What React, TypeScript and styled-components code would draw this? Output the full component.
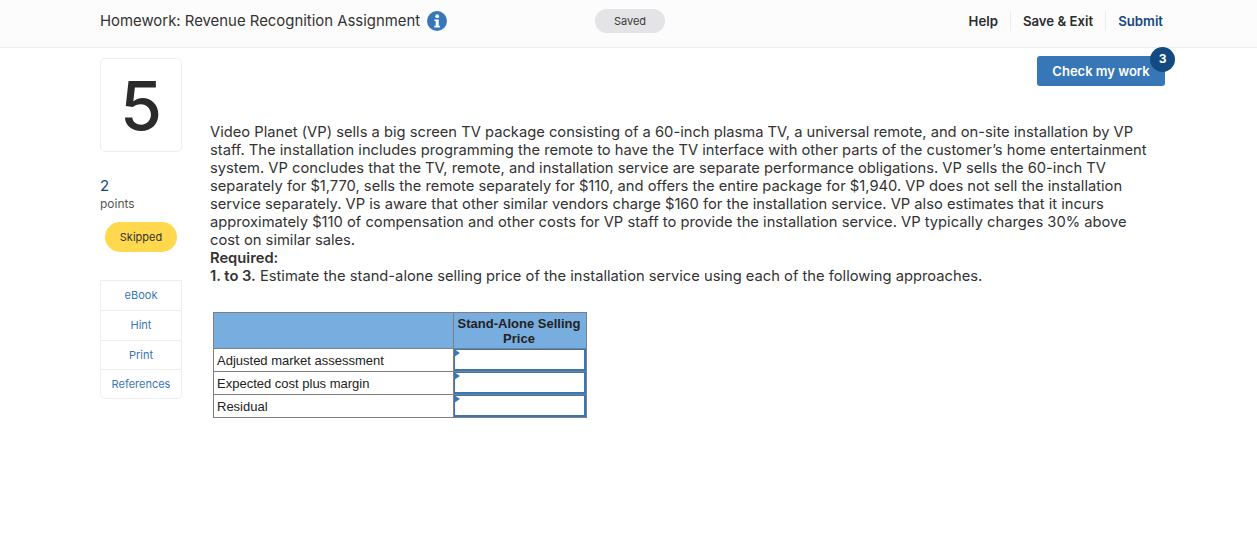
import React from "react";
import styled, { createGlobalStyle } from "styled-components";

const Global = createGlobalStyle`
  html, body { margin: 0; padding: 0; background: #fff; }
  body { font-family: Inter, Lato, sans-serif; color: #2d2d2d; font-variant-ligatures: none; }
`;

const Page = styled.div`
  width: 1257px;
  height: 543px;
  overflow: hidden;
`;

const Header = styled.header`
  box-sizing: content-box;
  background: #fcfcfc;
  border-bottom: 1px solid #ececec;
  display: grid;
  grid-template-columns: 495px 70px 1fr;
  align-items: center;
  padding: 0 94px 6px 100px;
  height: 41px;
`;

const TitleWrap = styled.div`
  display: flex;
  align-items: center;
  gap: 7px;
`;

const Title = styled.h1`
  margin: 0;
  font-size: 14.9px;
  font-weight: 400;
  color: #333;
`;

const InfoIcon = styled.svg`
  width: 20px;
  height: 20px;
  display: block;
`;

const SavedPill = styled.div`
  height: 24px;
  border-radius: 12px;
  background: #e4e3e6;
  font-size: 11px;
  color: #3b3b3b;
  display: flex;
  align-items: center;
  justify-content: center;
`;

const Nav = styled.nav`
  display: flex;
  justify-content: flex-end;
  align-items: center;
`;

const NavItem = styled.a<{ $accent?: boolean; $first?: boolean }>`
  font-size: 13.2px;
  font-weight: 600;
  line-height: 20px;
  padding: 0 12px;
  color: ${(p) => (p.$accent ? "#17497f" : "#2d2d2d")};
  border-left: ${(p) => (p.$first ? "none" : "1px solid #ececec")};
  &:last-child { padding-right: 0; }
`;

const Body = styled.div`
  display: flex;
  padding-left: 100px;
`;

const Sidebar = styled.aside`
  width: 82px;
  padding-top: 10px;
  display: flex;
  flex-direction: column;
  align-items: stretch;
`;

const NumberCard = styled.div`
  height: 94px;
  box-sizing: border-box;
  border: 1px solid #eeeeee;
  border-radius: 5px;
  display: flex;
  align-items: center;
  justify-content: center;
  font-size: 68px;
  line-height: 1;
  font-weight: 500;
  color: #2b2b2b;
`;

const Points = styled.div`
  margin-top: 26px;
  font-size: 15px;
  line-height: 16px;
  color: #17497f;
`;

const PointsLabel = styled.div`
  margin-top: 2px;
  font-size: 12px;
  line-height: 16px;
  color: #555;
`;

const SkippedPill = styled.div`
  align-self: center;
  margin-top: 10px;
  width: 72px;
  height: 30px;
  border-radius: 15px;
  background: #ffd84d;
  font-size: 11px;
  color: #333;
  display: flex;
  align-items: center;
  justify-content: center;
`;

const Tools = styled.div`
  margin-top: 28px;
  border: 1px solid #eeeeee;
  border-radius: 0 0 5px 5px;
  display: flex;
  flex-direction: column;
`;

const Tool = styled.a<{ $h: number }>`
  height: ${(p) => p.$h}px;
  box-sizing: border-box;
  display: flex;
  align-items: center;
  justify-content: center;
  padding-bottom: 1px;
  font-size: 11px;
  color: #3a76b5;
  & + & { border-top: 1px solid #eeeeee; }
`;

const Main = styled.main`
  width: 955px;
  padding-left: 28px;
  position: relative;
`;

const ButtonRow = styled.div`
  display: flex;
  justify-content: flex-end;
  padding-top: 8px;
`;

const CheckButton = styled.button`
  position: relative;
  width: 128px;
  height: 30px;
  border: 0;
  border-radius: 3px;
  background: #3777b7;
  color: #fff;
  font-family: inherit;
  font-size: 13px;
  font-weight: 600;
  padding: 0;
`;

const Badge = styled.span`
  position: absolute;
  right: -10px;
  top: -9px;
  width: 25px;
  height: 25px;
  border-radius: 50%;
  background: #134a81;
  color: #fff;
  font-size: 12px;
  font-weight: 700;
  display: flex;
  align-items: center;
  justify-content: center;
  padding-bottom: 2px;
  box-sizing: border-box;
`;

const Prose = styled.div`
  margin-top: 37px;
  font-size: 14.72px;
  line-height: 18px;
  color: #333;
  white-space: nowrap;
`;

const Strong = styled.strong`
  font-weight: 600;
`;

const Table = styled.table`
  margin: 27px 0 0 3px;
  border-collapse: collapse;
  font-family: "Liberation Sans", Arial, sans-serif;
  font-size: 13px;
  color: #222;
  table-layout: fixed;
  width: 373px;
`;

const HeadCell = styled.th<{ $w: number }>`
  width: ${(p) => p.$w}px;
  height: 36px;
  padding: 3px 3px 0 1px;
  box-sizing: border-box;
  background: #78addf;
  border: 1px solid #808080;
  font-weight: 700;
  text-align: center;
  line-height: 15px;
  vertical-align: top;
`;

const LabelCell = styled.td`
  height: 23px;
  padding: 1px 3px 0;
  box-sizing: border-box;
  border: 1px solid #808080;
  line-height: 15px;
  vertical-align: middle;
`;

const InputCell = styled.td`
  position: relative;
  padding: 0;
  border: 1px solid #808080;
  background: #fff;
`;

const InputBox = styled.div`
  position: absolute;
  inset: 0;
  border: 2px solid #3777b7;
  border-top-width: 1px;
  border-left-width: 1px;
`;

const Marker = styled.span`
  position: absolute;
  left: 0;
  top: 0;
  width: 0;
  height: 0;
  border-left: 6px solid #3777b7;
  border-top: 4px solid transparent;
  border-bottom: 4px solid transparent;
`;

const lines = [
  "Video Planet (VP) sells a big screen TV package consisting of a 60-inch plasma TV, a universal remote, and on-site installation by VP",
  "staff. The installation includes programming the remote to have the TV interface with other parts of the customer’s home entertainment",
  "system. VP concludes that the TV, remote, and installation service are separate performance obligations. VP sells the 60-inch TV",
  "separately for $1,770, sells the remote separately for $110, and offers the entire package for $1,940. VP does not sell the installation",
  "service separately. VP is aware that other similar vendors charge $160 for the installation service. VP also estimates that it incurs",
  "approximately $110 of compensation and other costs for VP staff to provide the installation service. VP typically charges 30% above",
  "cost on similar sales.",
];

const rows = ["Adjusted market assessment", "Expected cost plus margin", "Residual"];

export default function App() {
  return (
    <Page>
      <Global />
      <Header>
        <TitleWrap>
          <Title>Homework: Revenue Recognition Assignment</Title>
          <InfoIcon viewBox="0 0 20 20" aria-hidden="true">
            <circle cx="10" cy="10" r="10" fill="#3777b7" />
            <circle cx="10.2" cy="5.2" r="1.9" fill="#fff" />
            <path d="M7.4 8.4h4.3v6.3h1.2v1.7H7.4v-1.7h1.3v-4.6H7.4z" fill="#fff" />
          </InfoIcon>
        </TitleWrap>
        <SavedPill>Saved</SavedPill>
        <Nav>
          <NavItem $first>Help</NavItem>
          <NavItem>Save &amp; Exit</NavItem>
          <NavItem $accent>Submit</NavItem>
        </Nav>
      </Header>
      <Body>
        <Sidebar>
          <NumberCard>5</NumberCard>
          <Points>2</Points>
          <PointsLabel>points</PointsLabel>
          <SkippedPill>Skipped</SkippedPill>
          <Tools>
            <Tool $h={29}>eBook</Tool>
            <Tool $h={30}>Hint</Tool>
            <Tool $h={29}>Print</Tool>
            <Tool $h={29}>References</Tool>
          </Tools>
        </Sidebar>
        <Main>
          <ButtonRow>
            <CheckButton>
              Check my work
              <Badge>3</Badge>
            </CheckButton>
          </ButtonRow>
          <Prose>
            {lines.map((l) => (
              <div key={l}>{l}</div>
            ))}
            <div>
              <Strong>Required:</Strong>
            </div>
            <div>
              <Strong>1. to 3.</Strong> Estimate the stand-alone selling price of the installation service using each of the following approaches.
            </div>
          </Prose>
          <Table>
            <thead>
              <tr>
                <HeadCell $w={240} />
                <HeadCell $w={133}>Stand-Alone Selling Price</HeadCell>
              </tr>
            </thead>
            <tbody>
              {rows.map((r) => (
                <tr key={r}>
                  <LabelCell>{r}</LabelCell>
                  <InputCell>
                    <InputBox />
                    <Marker />
                  </InputCell>
                </tr>
              ))}
            </tbody>
          </Table>
        </Main>
      </Body>
    </Page>
  );
}
